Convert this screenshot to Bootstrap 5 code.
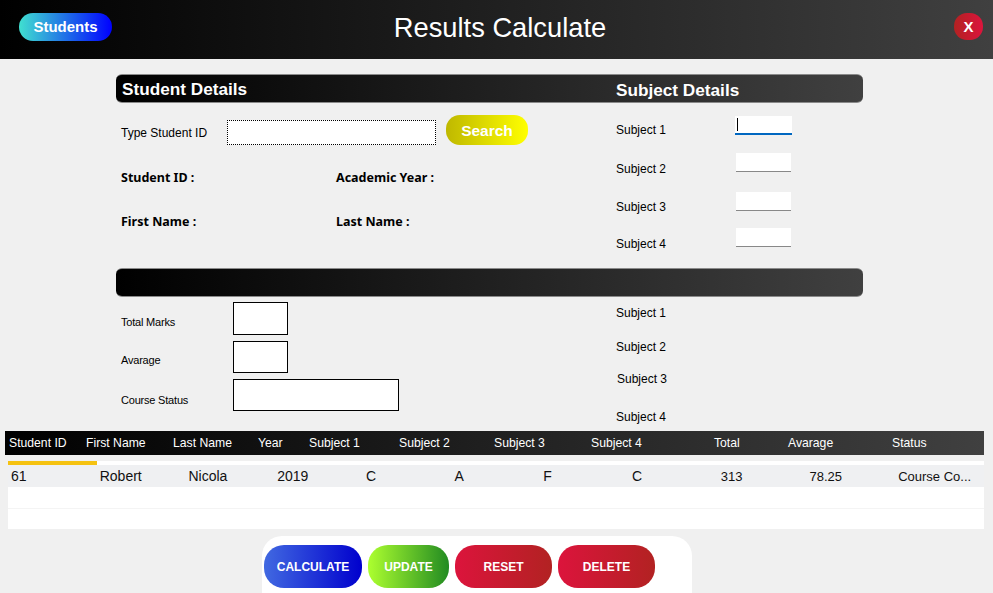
<!DOCTYPE html>
<html lang="en">
<head>
    <meta charset="UTF-8">
    <meta name="viewport" content="width=device-width, initial-scale=1.0">
    <title>Results Calculate</title>
    <link href="https://cdn.jsdelivr.net/npm/bootstrap@5.3.0/dist/css/bootstrap.min.css" rel="stylesheet">
    <style>
        html, body {
            height: 593px;
            overflow: hidden;
        }
        body {
            background: #f0f0f0;
            color: #000;
            font-family: "Liberation Sans", Arial, sans-serif;
            font-size: 12px;
            line-height: 14px;
        }
        .dark-grad {
            background: linear-gradient(90deg, #000, #404040);
            color: #fff;
        }
        .top-bar {
            height: 59px;
            padding: 13px 10px 0 19px;
        }
        .top-title {
            font-size: 27.3px;
            line-height: 28px;
            margin-right: 66px;
            padding-top: 1px;
        }
        .pill {
            border: 0;
            color: #fff;
            font-family: "Liberation Sans", Arial, sans-serif;
            font-weight: 700;
            padding: 0;
            text-align: center;
        }
        .pill-students {
            background: linear-gradient(90deg, #40e0d0, #0000ff);
            border-radius: 14px;
            font-size: 15px;
            height: 28px;
            width: 93px;
        }
        .pill-close {
            background: linear-gradient(90deg, #b22222, #dc143c);
            border-radius: 13px;
            font-size: 15px;
            height: 27px;
            width: 29px;
        }
        .form-area {
            margin: 15px 0 0 116px;
            width: 747px;
        }
        .strip {
            border-bottom: 1px solid #8a8a8a;
            border-radius: 6px;
            border-top: 1px solid #8a8a8a;
            font-size: 17.2px;
            font-weight: 700;
            height: 29px;
            line-height: 28px;
        }
        .strip-left {
            padding-left: 6px;
            width: 500px;
        }
        .strip-right {
            padding-top: 1px;
        }
        .col-left {
            width: 500px;
        }
        .details-row {
            height: 165px;
        }
        .details-left {
            padding-top: 13px;
        }
        .search-row {
            height: 29px;
            padding-left: 5px;
        }
        .search-label {
            margin-top: 4px;
            width: 106px;
        }
        .id-box {
            background: #fff;
            border: 1px dotted #000;
            border-radius: 0;
            height: 25px;
            margin-top: 4px;
            padding: 0;
            width: 209px;
        }
        .pill-search {
            background: linear-gradient(90deg, #bfb800, #ffff00);
            border-radius: 14px;
            font-size: 15.5px;
            height: 30px;
            margin-left: 10px;
            margin-top: -1px;
            padding-top: 1px;
            width: 82px;
        }
        .info-grid {
            display: grid;
            font-family: "Noto Sans", sans-serif;
            font-size: 12.5px;
            font-weight: 700;
            grid-template-columns: 215px 1fr;
            grid-template-rows: 44px 20px;
            line-height: 20px;
            margin-top: 23px;
            padding-left: 5px;
        }
        .subject-grid {
            display: grid;
            grid-template-columns: 120px 1fr;
            grid-template-rows: 37px 39px 36px 40px;
            padding-top: 13px;
        }
        .subject-grid span {
            margin-top: 9px;
        }
        .subject-grid span.first-sub {
            margin-top: 7px;
        }
        .subject-grid span.third-sub {
            margin-top: 8px;
        }
        .mark-box {
            background: #fff;
            border: 0;
            border-bottom: 1px solid #888;
            border-radius: 0;
            height: 19px;
            padding: 0;
            width: 55px;
        }
        .mark-active {
            background: linear-gradient(#000, #000) no-repeat 2px 2px / 1px 13px, #fff;
            border-bottom: 2px solid #0067c0;
            margin-left: -1px;
            width: 57px;
        }
        .summary-row {
            height: 134px;
        }
        .total-list {
            display: flex;
            flex-direction: column;
            gap: 6px;
            padding: 5px 0 0 5px;
        }
        .total-list label {
            font-size: 11px;
            letter-spacing: -.2px;
            margin-top: 7px;
            width: 112px;
        }
        .total-list label.avg-label {
            margin-top: 5px;
        }
        .total-list label.status-label {
            margin-top: 9px;
        }
        .total-box {
            background: #fff;
            border: 1px solid #000;
            height: 32px;
            width: 55px;
        }
        .total-wide {
            width: 166px;
        }
        .total-tall {
            height: 33px;
        }
        .subject-list {
            display: grid;
            grid-template-rows: 34px 32px 38px 14px;
            padding-top: 9px;
        }
        .shift-one {
            margin-left: 1px;
        }
        .grid-area {
            margin-left: 5px;
            width: 979px;
        }
        .grid-head {
            display: grid;
            font-size: 12.2px;
            grid-template-columns: 77px 87px 85px 51px 90px 95px 97px 123px 74px 104px 1fr;
            height: 24px;
            line-height: 24px;
            padding-left: 4px;
        }
        .grid-body {
            background: #fff;
            margin: 6px 0 0 3px;
            padding-top: 4px;
            position: relative;
        }
        .grid-marker {
            background: #f5c211;
            height: 4px;
            left: 0;
            position: absolute;
            top: 0;
            width: 89px;
        }
        .result-table {
            color: #111;
            font-size: 14px;
            margin: 0;
            table-layout: fixed;
            width: 100%;
        }
        .result-table td {
            background: transparent;
            border-bottom: 1px solid #f4f4f4;
            box-shadow: none;
            height: 21px;
            line-height: 20px;
            overflow: hidden;
            padding: 0 0 0 3px;
            white-space: nowrap;
        }
        .result-table tr:first-child td {
            background: #eff0f2;
            border-bottom: 0;
            height: 22px;
            line-height: 21px;
            padding-top: 1px;
        }
        .result-table tr:last-child td {
            border-bottom: 0;
        }
        .result-table tr:first-child td.tight-cell {
            font-size: 13px;
        }
        .action-bar {
            background: #fff;
            border-radius: 20px;
            column-gap: 6px;
            height: 80px;
            margin: 7px 0 0 262px;
            padding: 9px 0 0 2px;
            width: 430px;
        }
        .pill-action {
            border-radius: 20px;
            font-size: 12px;
            height: 43px;
        }
        .act-calc {
            background: linear-gradient(90deg, #4169e1, #0000cd);
            width: 98px;
        }
        .act-update {
            background: linear-gradient(90deg, #adff2f, #228b22);
            width: 81px;
        }
        .act-reset {
            background: linear-gradient(90deg, #dc143c, #b22222);
            width: 97px;
        }
        .act-delete {
            background: linear-gradient(90deg, #dc143c, #b22222);
            width: 97px;
        }
    </style>
</head>
<body>
    <header class="top-bar dark-grad d-flex justify-content-between align-items-start">
        <button class="pill pill-students" type="button">Students</button>
        <div class="top-title">Results Calculate</div>
        <button class="pill pill-close" type="button">X</button>
    </header>

    <main class="form-area">
        <div class="strip dark-grad d-flex">
            <div class="strip-left">Student Details</div>
            <div class="strip-right">Subject Details</div>
        </div>
        <div class="details-row d-flex">
            <div class="col-left details-left">
                <div class="search-row d-flex align-items-center">
                    <label class="search-label">Type Student ID</label>
                    <input class="id-box" type="text">
                    <button class="pill pill-search" type="button">Search</button>
                </div>
                <div class="info-grid">
                    <div>Student ID :</div>
                    <div>Academic Year :</div>
                    <div>First Name :</div>
                    <div>Last Name :</div>
                </div>
            </div>
            <div class="subject-grid flex-grow-1">
                <span class="first-sub">Subject 1</span><div><input class="mark-box mark-active" type="text"></div>
                <span>Subject 2</span><div><input class="mark-box" type="text"></div>
                <span class="third-sub">Subject 3</span><div><input class="mark-box" type="text"></div>
                <span>Subject 4</span><div><input class="mark-box" type="text"></div>
            </div>
        </div>

        <div class="strip dark-grad"></div>
        <div class="summary-row d-flex">
            <div class="col-left total-list">
                <div class="d-flex align-items-center"><label>Total Marks</label><div class="total-box total-tall"></div></div>
                <div class="d-flex align-items-center"><label class="avg-label">Avarage</label><div class="total-box"></div></div>
                <div class="d-flex align-items-center"><label class="status-label">Course Status</label><div class="total-box total-wide"></div></div>
            </div>
            <div class="subject-list flex-grow-1">
                <span>Subject 1</span>
                <span>Subject 2</span>
                <span class="shift-one">Subject 3</span>
                <span>Subject 4</span>
            </div>
        </div>
    </main>

    <section class="grid-area">
        <div class="grid-head dark-grad">
            <span>Student ID</span><span>First Name</span><span>Last Name</span><span>Year</span>
            <span>Subject 1</span><span>Subject 2</span><span>Subject 3</span><span>Subject 4</span>
            <span>Total</span><span>Avarage</span><span>Status</span>
        </div>
        <div class="grid-body">
            <div class="grid-marker"></div>
            <table class="table result-table">
                <tbody>
                    <tr><td>61</td><td>Robert</td><td>Nicola</td><td>2019</td><td>C</td><td>A</td><td>F</td><td>C</td><td class="tight-cell">313</td><td class="tight-cell">78.25</td><td class="tight-cell">Course Co...</td></tr>
                    <tr><td></td><td></td><td></td><td></td><td></td><td></td><td></td><td></td><td></td><td></td><td></td></tr>
                    <tr><td></td><td></td><td></td><td></td><td></td><td></td><td></td><td></td><td></td><td></td><td></td></tr>
                </tbody>
            </table>
        </div>
    </section>

    <div class="action-bar d-flex align-items-start">
        <button class="pill pill-action act-calc" type="button">CALCULATE</button>
        <button class="pill pill-action act-update" type="button">UPDATE</button>
        <button class="pill pill-action act-reset" type="button">RESET</button>
        <button class="pill pill-action act-delete" type="button">DELETE</button>
    </div>

    <script src="https://cdn.jsdelivr.net/npm/bootstrap@5.3.0/dist/js/bootstrap.bundle.min.js"></script>
</body>
</html>
